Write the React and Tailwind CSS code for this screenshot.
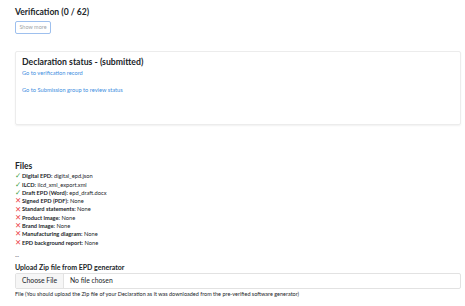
import React from 'react';

const files = [
  { ok: true, label: 'Digital EPD:', value: 'digital_epd.json' },
  { ok: true, label: 'ILCD:', value: 'ilcd_xml_export.xml' },
  { ok: true, label: 'Draft EPD (Word):', value: 'epd_draft.docx' },
  { ok: false, label: 'Signed EPD (PDF):', value: 'None' },
  { ok: false, label: 'Standard statements:', value: 'None' },
  { ok: false, label: 'Product image:', value: 'None' },
  { ok: false, label: 'Brand image:', value: 'None' },
  { ok: false, label: 'Manufacturing diagram:', value: 'None' },
  { ok: false, label: 'EPD background report:', value: 'None' },
];

export default function App() {
  return (
    <div
      className="w-[465px] h-[306px] overflow-hidden bg-white text-[#212529] pl-[15px] pr-[4px] leading-none"
      style={{ fontFamily: 'Lato, "Noto Sans", sans-serif' }}
    >
      {/* Verification */}
      <h2 className="pt-[6px] text-[8.6px] leading-[13px] font-bold">Verification (0 / 62)</h2>
      <div className="mt-[2px] flex">
        <button className="h-[13px] w-[36px] border border-[#9ec0ee] rounded-[2px] text-[5.5px] text-[#a0a4a8] leading-none">
          Show more
        </button>
      </div>

      {/* Declaration status card */}
      <div className="mt-[17px] h-[74px] w-[446px] border border-[#ececec] rounded-[2px] shadow-[0_1px_2px_rgba(0,0,0,0.06)] px-[6px] pt-[3px]">
        <h3 className="text-[8.7px] leading-[13px] font-bold">Declaration status - (submitted)</h3>
        <a className="block mt-[1px] text-[5.7px] leading-[8px] text-[#3d8ee0]">Go to verification record</a>
        <a className="block mt-[9px] text-[5.7px] leading-[8px] text-[#3d8ee0]">Go to Submission group to review status</a>
      </div>

      {/* Files */}
      <h3 className="mt-[35px] text-[8.5px] leading-[12px] font-bold">Files</h3>
      <ul>
        {files.map((f) => (
          <li key={f.label} className="flex items-center h-[8.3px] text-[5.7px]">
            <span
              className={`w-[7px] shrink-0 text-[7.5px] ${f.ok ? 'text-[#3fa34d]' : 'text-[#ec4349]'}`}
              style={{ fontFamily: '"DejaVu Sans", sans-serif' }}
            >
              {f.ok ? '✓' : '✕'}
            </span>
            <span>
              <span className="font-bold">{f.label}</span> {f.value}
            </span>
          </li>
        ))}
      </ul>

      <p className="mt-[5px] text-[5.5px] leading-[8px]">--</p>

      {/* Upload */}
      <h4 className="mt-[3px] text-[7px] leading-[9px] font-bold">Upload Zip file from EPD generator</h4>
      <div className="mt-[1px] flex items-center h-[16px] w-[446px] border border-[#e2e2e2] rounded-[2px] text-[6.8px]">
        <span className="px-[6px] h-full flex items-center bg-[#f6f6f6] border-r border-[#e2e2e2]">Choose File</span>
        <span className="px-[6px]">No file chosen</span>
      </div>
      <p className="mt-[1px] text-[5.5px] leading-[8px]">
        File (You should upload the Zip file of your Declaration as it was downloaded from the pre-verified software generator)
      </p>
    </div>
  );
}
